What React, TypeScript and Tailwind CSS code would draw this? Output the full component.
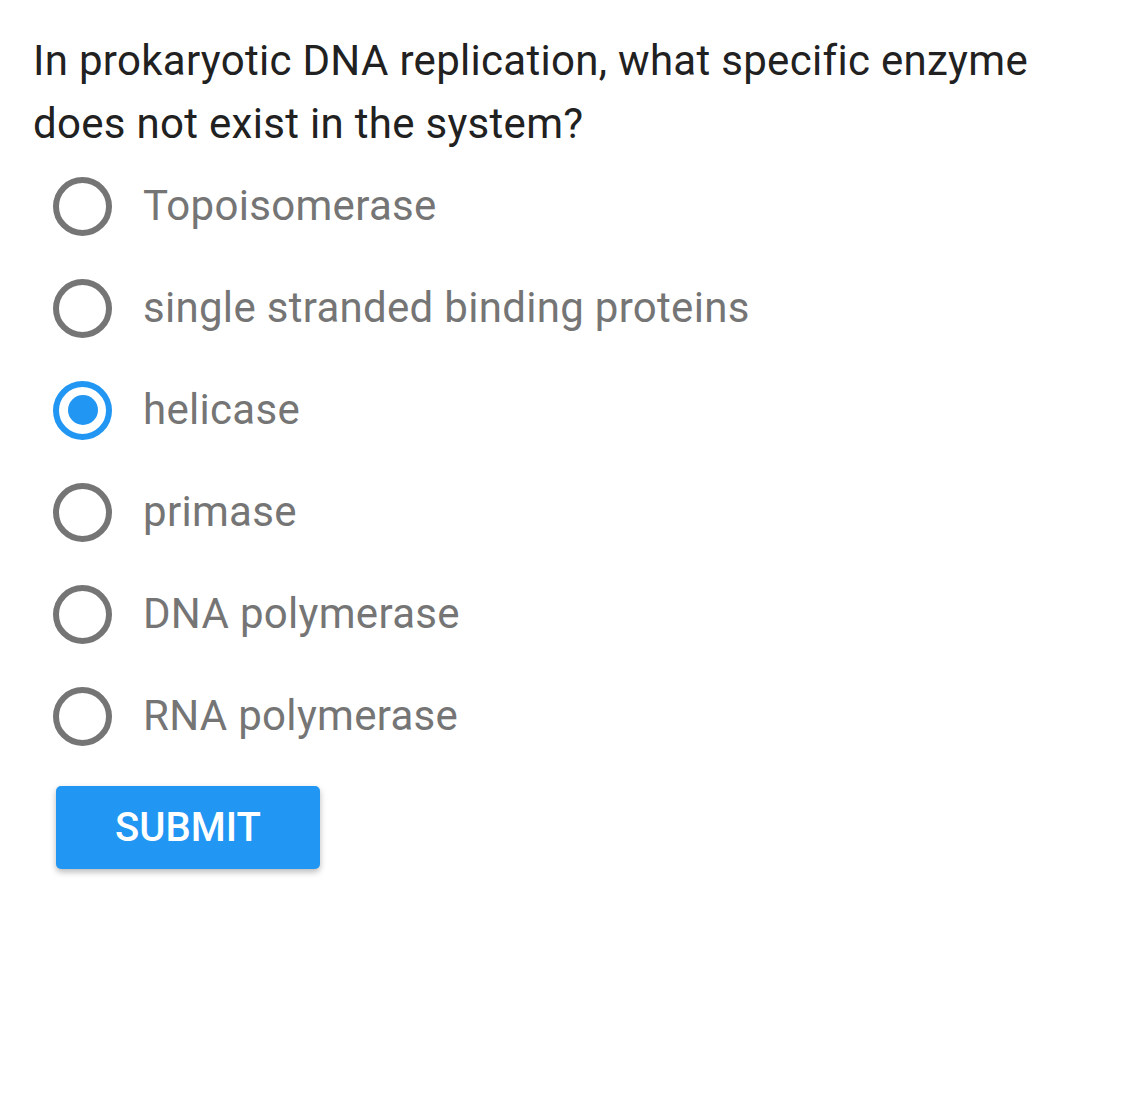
import React, { useState } from "react";

const options = [
  "Topoisomerase",
  "single stranded binding proteins",
  "helicase",
  "primase",
  "DNA polymerase",
  "RNA polymerase",
];

function Radio({ checked }: { checked: boolean }) {
  return (
    <span
      className={
        "flex h-[59px] w-[59px] shrink-0 items-center justify-center rounded-full border-[6px] " +
        (checked ? "border-[#2196f3]" : "border-[#757575]")
      }
    >
      {checked && <span className="h-[30px] w-[30px] rounded-full bg-[#2196f3]" />}
    </span>
  );
}

export default function App() {
  const [selected, setSelected] = useState(2);
  return (
    <div
      className="min-h-[1100px] w-[1146px] bg-white pl-[33px] pt-[29px]"
      style={{ fontFamily: "Roboto, 'Noto Sans', sans-serif" }}
    >
      <p className="w-[1080px] text-[42px] leading-[63px] tracking-[0.3px] text-[#212121]">
        In prokaryotic DNA replication, what specific enzyme does not exist in the system?
      </p>
      <div className="flex flex-col">
        {options.map((o, i) => (
          <button
            key={o}
            onClick={() => setSelected(i)}
            className="flex h-[102px] items-center gap-[31px] pl-[20px] text-left"
          >
            <Radio checked={selected === i} />
            <span className="text-[42px] leading-[50px] tracking-[0.3px] text-[#757575]">{o}</span>
          </button>
        ))}
      </div>
      <button className="ml-[23px] mt-[19px] flex h-[83px] w-[264px] items-center justify-center rounded-[5px] bg-[#2196f3] text-[40px] font-medium text-white shadow-[0_3px_6px_rgba(0,0,0,0.28)]">
        SUBMIT
      </button>
    </div>
  );
}
